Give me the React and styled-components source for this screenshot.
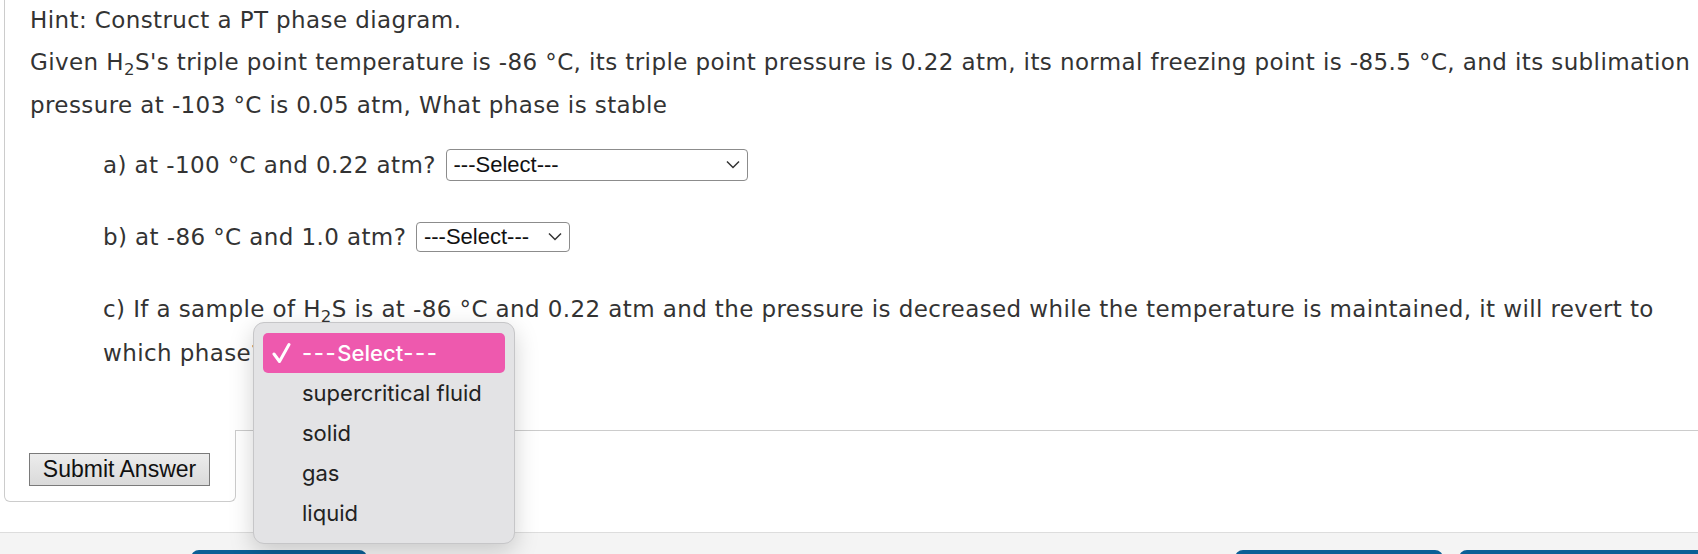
import styled, { createGlobalStyle } from 'styled-components'

const GlobalStyle = createGlobalStyle`
  html, body {
    margin: 0;
    padding: 0;
    background: #ffffff;
  }
  body {
    overflow: hidden;
  }
`

const Page = styled.div`
  position: relative;
  width: 1698px;
  height: 554px;
  overflow: hidden;
  font-family: "DejaVu Sans", Verdana, sans-serif;
  color: #333333;
`

const Card = styled.div`
  margin-left: 4px;
`

const Question = styled.div`
  border-left: 1px solid #cccccc;
  padding: 0 0 55px 25px;
  font-size: 23px;
  letter-spacing: 0.4px;
  white-space: nowrap;
`

const Hint = styled.div`
  line-height: 41px;
`

const Lead = styled.p`
  margin: 0;
  line-height: 43px;
`

const Part = styled.p`
  margin: ${(p) => (p.$first ? '16px' : '28px')} 0 0 73px;
  line-height: 44px;
`

const Sub = styled.sub`
  font-size: 0.72em;
  line-height: 0;
  vertical-align: -0.3em;
`

const SelectBox = styled.span`
  display: inline-flex;
  align-items: center;
  justify-content: space-between;
  box-sizing: border-box;
  width: ${(p) => p.$w}px;
  height: ${(p) => p.$h || 32}px;
  padding: 0 7px 0 7px;
  margin-left: 2px;
  border: 1px solid #8c8c8c;
  border-radius: 4px;
  background: #ffffff;
  font-family: "Liberation Sans", Arial, sans-serif;
  font-size: 22px;
  letter-spacing: 0;
  color: #111111;
  vertical-align: middle;
  position: relative;
  top: -2px;
`

const Chevron = () => (
  <svg width="14" height="9" viewBox="0 0 14 9">
    <polyline points="1,1.5 7,7.5 13,1.5" fill="none" stroke="#333" strokeWidth="1.5" />
  </svg>
)

const BottomRow = styled.div`
  display: flex;
`

const SubmitCell = styled.div`
  width: 232px;
  box-sizing: border-box;
  border: 1px solid #cccccc;
  border-top: none;
  border-radius: 0 0 6px 6px;
  padding: 23px 0 15px 24px;
`

const Rest = styled.div`
  flex: 1;
  border-top: 1px solid #cccccc;
`

const SubmitButton = styled.button`
  display: block;
  width: 181px;
  height: 33px;
  padding: 0;
  border: 1px solid #7a7a7a;
  border-radius: 0;
  background: linear-gradient(#ececec, #dadada);
  font-family: "Liberation Sans", Arial, sans-serif;
  font-size: 23px;
  color: #111111;
`

const Footer = styled.div`
  margin-top: 30px;
  height: 60px;
  border-top: 1px solid #dddddd;
  background: #f4f4f4;
  display: flex;
  align-items: flex-start;
  padding: 17px 0 0 191px;
`

const NavButton = styled.div`
  flex-shrink: 0;
  width: ${(p) => p.$w}px;
  height: 44px;
  border-radius: 8px;
  background: #0a5f96;
  margin-left: ${(p) => p.$ml || 0}px;
`

const Menu = styled.div`
  position: absolute;
  left: 253px;
  top: 322px;
  width: 262px;
  height: 222px;
  box-sizing: border-box;
  padding: 10px 9px;
  background: #e3e3e5;
  border: 1px solid #c6c6c8;
  border-radius: 11px;
  box-shadow: 0 8px 24px rgba(0, 0, 0, 0.18);
  font-family: Inter, "Noto Sans", sans-serif;
  font-size: 22px;
  color: #222222;
`

const Item = styled.div`
  display: flex;
  align-items: center;
  height: 40px;
  border-radius: 5px;
  padding-left: 9px;
  background: ${(p) => (p.$active ? '#ee59ae' : 'transparent')};
  color: ${(p) => (p.$active ? '#ffffff' : '#222222')};
  font-weight: ${(p) => (p.$active ? 500 : 400)};
`

const CheckSlot = styled.span`
  display: flex;
  align-items: center;
  width: 30px;
`

const Dashes = styled.span`
  letter-spacing: 1.6px;
`

const CheckMark = () => (
  <svg width="20" height="22" viewBox="0 0 20 22">
    <polyline points="2,12 7.5,19.5 17,2.5" fill="none" stroke="#fff" strokeWidth="3" strokeLinecap="round" strokeLinejoin="round" />
  </svg>
)

const options = ['supercritical fluid', 'solid', 'gas', 'liquid']

export default function App() {
  return (
    <Page>
      <GlobalStyle />
      <Card>
        <Question>
          <Hint>Hint: Construct a PT phase diagram.</Hint>
          <Lead>
            Given H<Sub>2</Sub>S's triple point temperature is -86 °C, its triple point pressure is 0.22 atm, its
            normal freezing point is -85.5 °C, and its sublimation
            <br />
            pressure at -103 °C is 0.05 atm, What phase is stable
          </Lead>
          <Part $first>
            a) at -100 °C and 0.22 atm?{' '}
            <SelectBox $w={302}>
              ---Select---
              <Chevron />
            </SelectBox>
          </Part>
          <Part>
            b) at -86 °C and 1.0 atm?{' '}
            <SelectBox $w={154} $h={30}>
              ---Select---
              <Chevron />
            </SelectBox>
          </Part>
          <Part>
            c) If a sample of H<Sub>2</Sub>S is at -86 °C and 0.22 atm and the pressure is decreased while the
            temperature is maintained, it will revert to
            <br />
            which phase?{' '}
            <SelectBox $w={154} $h={30}>
              ---Select---
              <Chevron />
            </SelectBox>
          </Part>
        </Question>
        <BottomRow>
          <SubmitCell>
            <SubmitButton>Submit Answer</SubmitButton>
          </SubmitCell>
          <Rest />
        </BottomRow>
      </Card>
      <Footer>
        <NavButton $w={176} />
        <NavButton $w={208} $ml={868} />
        <NavButton $w={260} $ml={16} />
      </Footer>
      <Menu>
        <Item $active>
          <CheckSlot>
            <CheckMark />
          </CheckSlot>
          <Dashes>---</Dashes>Select<Dashes>---</Dashes>
        </Item>
        {options.map((o) => (
          <Item key={o}>
            <CheckSlot />
            {o}
          </Item>
        ))}
      </Menu>
    </Page>
  )
}
